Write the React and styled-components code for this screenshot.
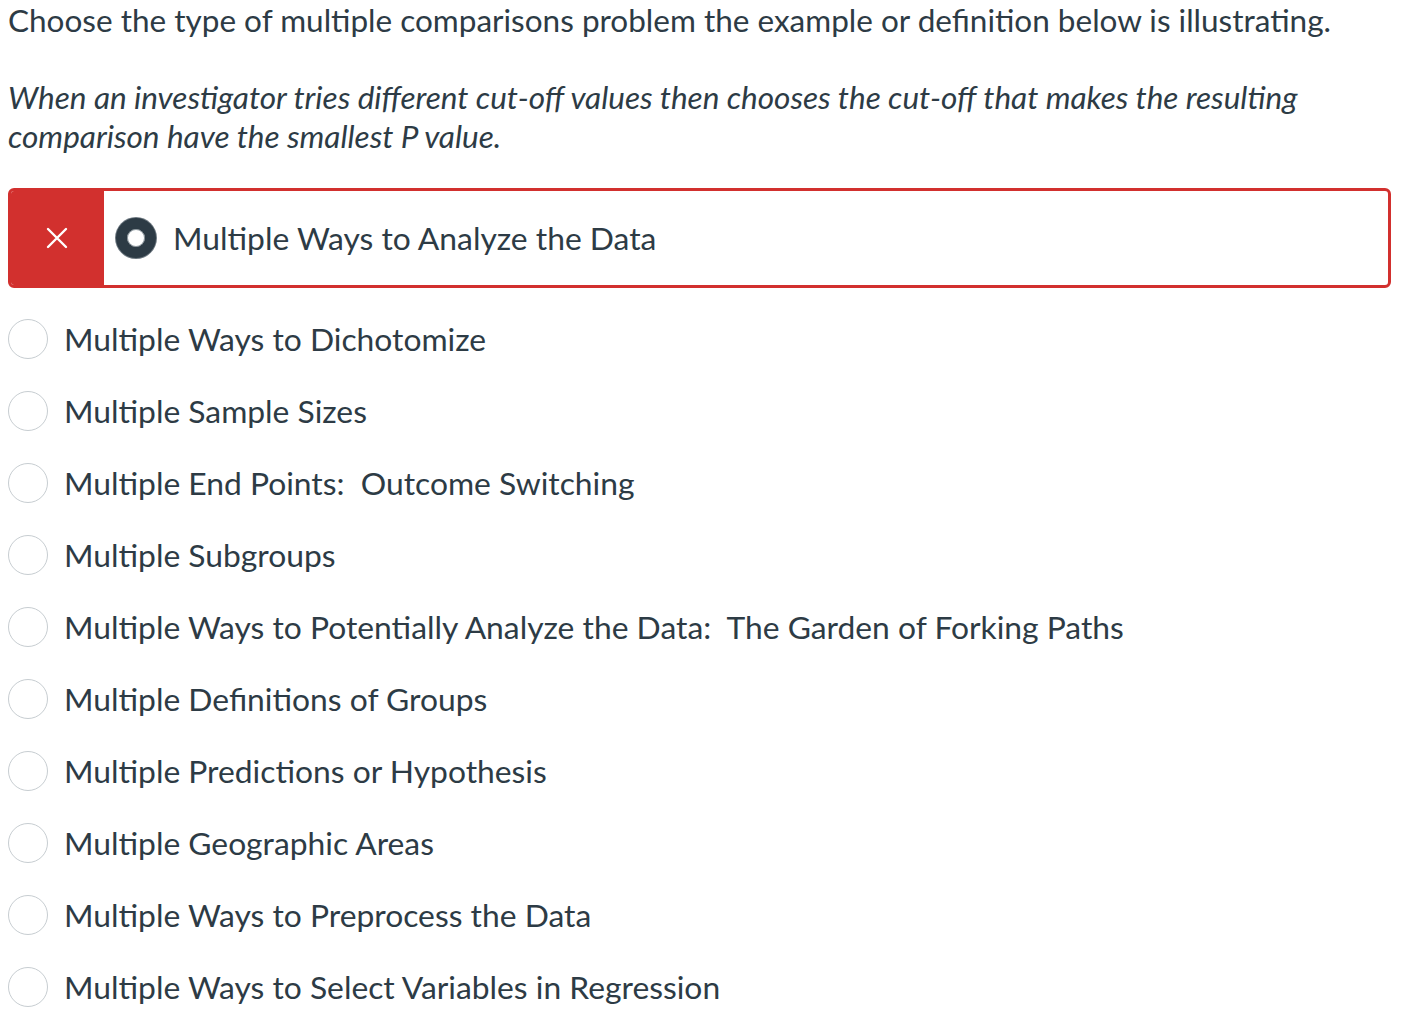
import React from "react";
import styled, { createGlobalStyle } from "styled-components";

const GlobalStyle = createGlobalStyle`
  body {
    margin: 0;
    background: #ffffff;
    font-family: Lato, "Noto Sans", sans-serif;
    color: #2d3b45;
  }
`;

const Page = styled.div`
  padding: 0 21px 0 8px;
`;

const Prompt = styled.p`
  margin: 0;
  font-size: 31.5px;
  line-height: 40px;
`;

const Example = styled.p`
  margin: 38px 0 0;
  font-size: 31.5px;
  line-height: 39px;
  font-style: italic;
`;

const Answers = styled.div`
  margin-top: 32px;
  display: flex;
  flex-direction: column;
`;

const WrongAnswer = styled.div`
  display: flex;
  align-items: stretch;
  height: 100px;
  box-sizing: border-box;
  border: 3px solid #d2302e;
  border-radius: 6px;
  overflow: hidden;
  margin-bottom: 15px;
`;

const Flag = styled.div`
  width: 93px;
  flex-shrink: 0;
  background: #d2302e;
  display: flex;
  align-items: center;
  justify-content: center;
  padding-right: 2px;
  box-sizing: border-box;
`;

const Row = styled.label`
  display: flex;
  align-items: center;
  gap: ${({ $gap }) => $gap || 16}px;
  height: ${({ $h }) => $h || 72}px;
  padding-left: ${({ $pad }) => $pad || 0}px;
  font-size: 31.8px;
`;

const Radio = styled.span`
  width: 40px;
  height: 40px;
  box-sizing: border-box;
  border-radius: 50%;
  flex-shrink: 0;
  border: ${({ $checked }) =>
    $checked ? "11px solid #2d3b45" : "1.5px solid #c7cdd1"};
  box-shadow: ${({ $checked }) =>
    $checked ? "inset 0 0 0 1px #8a959c, 0 0 0 1px #6d7880" : "none"};
  background: #fff;
`;

const options = [
  "Multiple Ways to Dichotomize",
  "Multiple Sample Sizes",
  "Multiple End Points:\u00a0 Outcome Switching",
  "Multiple Subgroups",
  "Multiple Ways to Potentially Analyze the Data:\u00a0 The Garden of Forking Paths",
  "Multiple Definitions of Groups",
  "Multiple Predictions or Hypothesis",
  "Multiple Geographic Areas",
  "Multiple Ways to Preprocess the Data",
  "Multiple Ways to Select Variables in Regression",
];

const Cross = () => (
  <svg width="22" height="22" viewBox="0 0 22 22">
    <path d="M2 2 L20 20 M20 2 L2 20" stroke="#fff" strokeWidth="2.4" strokeLinecap="round" />
  </svg>
);

export default function App() {
  return (
    <Page>
      <GlobalStyle />
      <Prompt>
        Choose the type of multiple comparisons problem the example or definition below is illustrating.
      </Prompt>
      <Example>
        When an investigator tries different cut-off values then chooses the cut-off that makes the resulting comparison have the smallest P value.
      </Example>
      <Answers>
        <WrongAnswer>
          <Flag>
            <Cross />
          </Flag>
          <Row $h={94} $pad={12} $gap={17}>
            <Radio $checked />
            Multiple Ways to Analyze the Data
          </Row>
        </WrongAnswer>
        {options.map((o) => (
          <Row key={o}>
            <Radio />
            {o}
          </Row>
        ))}
      </Answers>
    </Page>
  );
}
